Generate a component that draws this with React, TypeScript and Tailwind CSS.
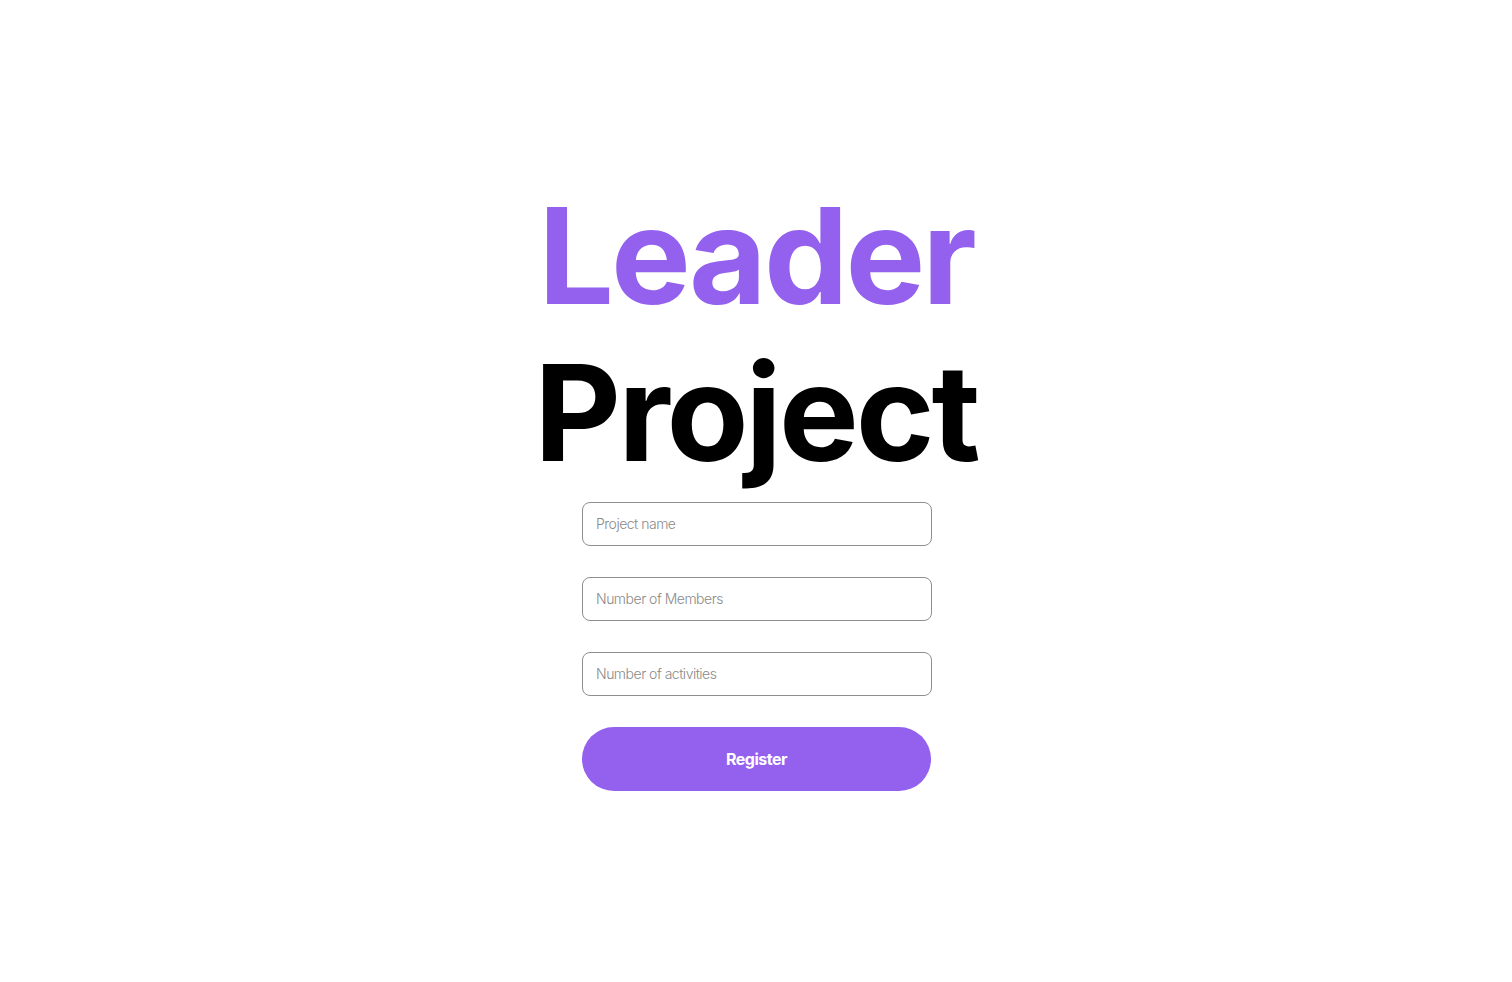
import React from "react";

export default function App() {
  const inputCls =
    "h-[44px] w-full rounded-[8px] border border-[#8e8e8e] px-[13px] pb-[2px] text-[14px] tracking-[-0.5px] font-light text-gray-800 placeholder:text-[#8a8a8a] outline-none";
  return (
    <div
      className="min-h-screen w-full bg-white flex flex-col items-center"
      style={{ fontFamily: "Inter, 'Noto Sans', sans-serif" }}
    >
      <div className="h-[177px]" />
      <h1 className="text-[134px] leading-[157px] font-bold text-[#9461ef] tracking-[-3px] text-center">
        Leader
      </h1>
      <h1 className="text-[134px] leading-[157px] font-bold text-black tracking-[-3px] text-center">
        Project
      </h1>
      <form
        className="mt-[11px] ml-[2px] flex flex-col gap-[31px] w-[350px]"
        onSubmit={(e) => e.preventDefault()}
      >
        <input type="text" placeholder="Project name" className={inputCls} />
        <input type="text" placeholder="Number of Members" className={inputCls} />
        <input type="text" placeholder="Number of activities" className={inputCls} />
        <button
          type="submit"
          className="h-[64px] w-[349px] rounded-full bg-[#9461ef] text-white text-[16px] font-bold tracking-[-0.5px]"
        >
          Register
        </button>
      </form>
    </div>
  );
}
